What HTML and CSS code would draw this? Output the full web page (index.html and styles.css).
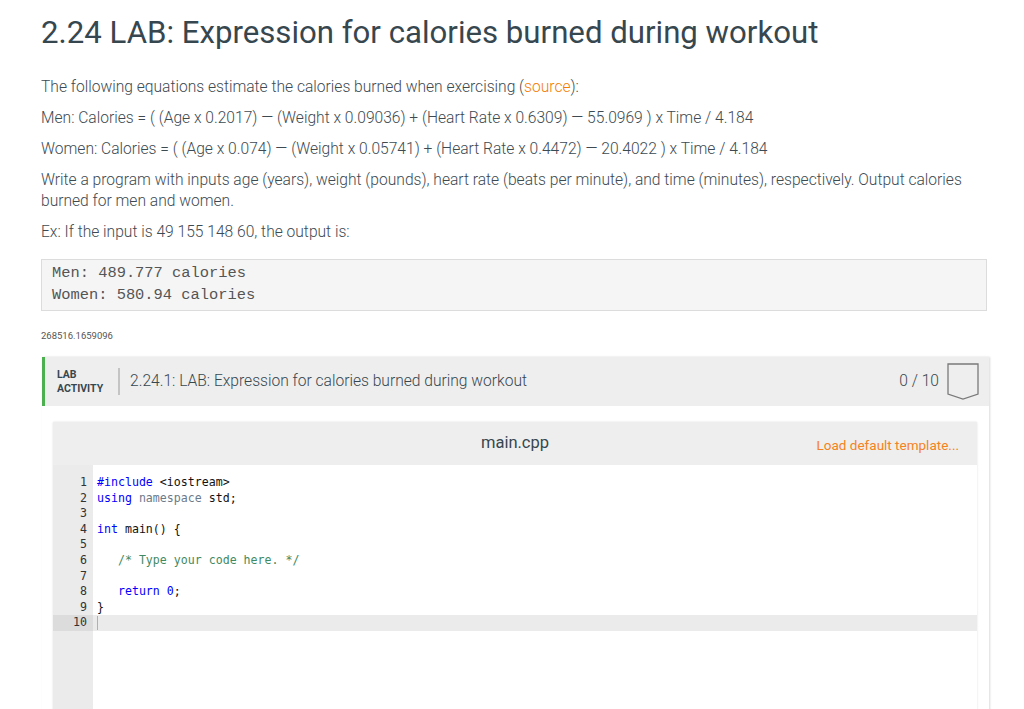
FILE: index.html
```html
<!DOCTYPE html>
<html>
<head>
<meta charset="utf-8">
<link rel="stylesheet" href="styles.css">
</head>
<body>
<div class="page">
  <h1 class="title">2.24 LAB: Expression for calories burned during workout</h1>
  <p class="para">The following equations estimate the calories burned when exercising (<a class="link">source</a>):</p>
  <p class="para">Men: Calories = ( (Age x 0.2017) — (Weight x 0.09036) + (Heart Rate x 0.6309) — 55.0969 ) x Time / 4.184</p>
  <p class="para">Women: Calories = ( (Age x 0.074) — (Weight x 0.05741) + (Heart Rate x 0.4472) — 20.4022 ) x Time / 4.184</p>
  <p class="para">Write a program with inputs age (years), weight (pounds), heart rate (beats per minute), and time (minutes), respectively. Output calories burned for men and women.</p>
  <p class="para">Ex: If the input is 49 155 148 60, the output is:</p>
  <pre class="sample">Men: 489.777 calories
Women: 580.94 calories</pre>
  <div class="tiny">268516.1659096</div>

  <div class="activity">
    <div class="act-head">
      <div class="act-label">LAB<br>ACTIVITY</div>
      <div class="act-sep"></div>
      <div class="act-title">2.24.1: LAB: Expression for calories burned during workout</div>
      <div class="act-score">0 / 10</div>
      <svg class="badge" width="32" height="38" viewBox="0 0 32 38">
        <path d="M1 1 H31 V31 L16 36 L1 31 Z" fill="none" stroke="#7a7a7a" stroke-width="1.3"/>
      </svg>
    </div>
    <div class="act-body">
      <div class="editor">
        <div class="ed-head">
          <div class="ed-file">main.cpp</div>
          <a class="ed-load">Load default template...</a>
        </div>
        <div class="ed-code">
          <div class="gutter">
            <div class="ln">1</div><div class="ln">2</div><div class="ln">3</div><div class="ln">4</div><div class="ln">5</div>
            <div class="ln">6</div><div class="ln">7</div><div class="ln">8</div><div class="ln">9</div><div class="ln ln-active">10</div>
          </div>
          <div class="lines">
            <div class="cl"><span class="kw">#include</span> &lt;iostream&gt;</div>
            <div class="cl"><span class="kw">using</span> <span class="ns">namespace</span> std;</div>
            <div class="cl"> </div>
            <div class="cl"><span class="kw">int</span> main() {</div>
            <div class="cl"> </div>
            <div class="cl">   <span class="cm">/* Type your code here. */</span></div>
            <div class="cl"> </div>
            <div class="cl">   <span class="kw">return</span> <span class="kw">0</span>;</div>
            <div class="cl">}</div>
            <div class="cl cl-active"><span class="cursor"></span></div>
          </div>
        </div>
      </div>
    </div>
  </div>
</div>
</body>
</html>
```

FILE: styles.css
```css
html, body {
  margin: 0;
  padding: 0;
  background: #ffffff;
  overflow: hidden;
}

body {
  font-family: Roboto, "Noto Sans", sans-serif;
  color: #3d4a52;
}

.page {
  width: 948px;
  padding-left: 41px;
}

.title {
  margin: 13px 0 24px 0;
  font-size: 31.2px;
  font-weight: 400;
  line-height: 40px;
  color: #37474f;
}

.para {
  margin: 0 0 10px 0;
  font-size: 15.6px;
  font-weight: 300;
  line-height: 21px;
  color: #3d4a52;
}

.link {
  color: #f57c00;
}

.sample {
  margin: 16px 2px 0 0;
  padding: 3px 10px 4px 10px;
  background: #f5f5f5;
  border: 1px solid #dcdcdc;
  font-family: "Liberation Mono", monospace;
  font-size: 15.4px;
  line-height: 21.5px;
  color: #555555;
}

.tiny {
  margin-top: 19px;
  font-size: 9.5px;
  line-height: 12px;
  color: #555555;
}

.activity {
  margin-top: 15px;
  margin-left: 1px;
  width: 947px;
  height: 360px;
  box-shadow: 1px 0 2px rgba(0,0,0,0.15);
}

.act-head {
  height: 49px;
  background: #eeeeee;
  border-left: 3px solid #4caf50;
  display: flex;
  align-items: center;
  padding: 0 10px 0 12px;
}

.act-label {
  font-size: 10.5px;
  font-weight: 700;
  line-height: 14px;
  color: #37474f;
  width: 61px;
  margin-top: 1px;
}

.act-sep {
  width: 2px;
  height: 27px;
  background: #c4c4c4;
  margin: 0 10px 0 0;
}

.act-title {
  flex: 1;
  font-size: 15.6px;
  font-weight: 300;
  color: #37474f;
  margin-top: -2px;
}

.act-score {
  font-size: 15.6px;
  font-weight: 300;
  color: #37474f;
  margin-right: 8px;
  margin-top: -2px;
}

.badge {
  display: block;
  margin-top: 1px;
}

.act-body {
  padding: 16px 12px 0 11px;
}

.editor {
  height: 300px;
  box-shadow: 0 0 2px rgba(0,0,0,0.12);
}

.ed-head {
  height: 43px;
  background: #eeeeee;
  display: flex;
  align-items: center;
  justify-content: center;
  position: relative;
}

.ed-file {
  font-size: 16.5px;
  color: #37474f;
  margin-top: -2px;
}

.ed-load {
  position: absolute;
  right: 18px;
  top: 15px;
  font-size: 13.5px;
  color: #f58220;
}

.ed-code {
  display: flex;
  height: 260px;
  background: #ffffff;
}

.gutter {
  width: 40px;
  background: #ebebeb;
  padding-top: 10px;
  font-family: "DejaVu Sans Mono", monospace;
  font-size: 11.6px;
  line-height: 15.6px;
  color: #333333;
  text-align: right;
}

.ln {
  padding-right: 6px;
  height: 15.6px;
}

.ln-active {
  background: #dcdcdc;
}

.lines {
  flex: 1;
  padding-top: 10px;
  font-family: "DejaVu Sans Mono", monospace;
  font-size: 11.6px;
  line-height: 15.6px;
  color: #111111;
}

.cl {
  height: 15.6px;
  padding-left: 4px;
  white-space: pre;
}

.cl-active {
  background: #ebebeb;
}

.kw {
  color: #0000ff;
}

.ns {
  color: #6b7a8a;
}

.cm {
  color: #3f8a62;
}

.cursor {
  display: inline-block;
  width: 1px;
  height: 14px;
  background: #b0b0b0;
  vertical-align: middle;
}
```
